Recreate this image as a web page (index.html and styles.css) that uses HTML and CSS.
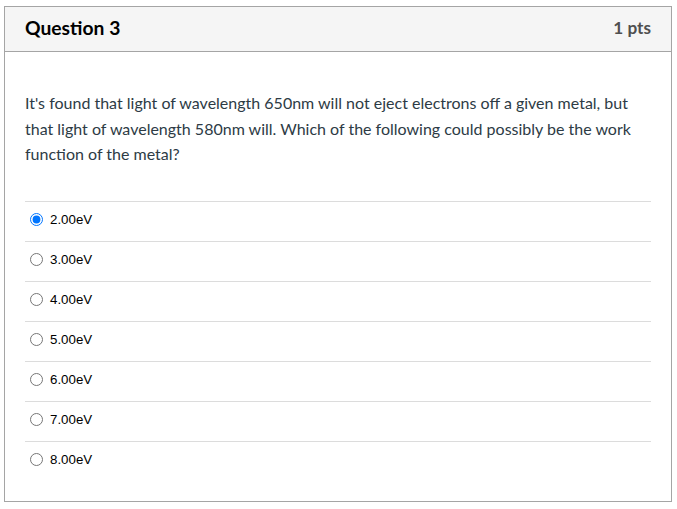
FILE: index.html
```html
<!DOCTYPE html>
<html>
<head>
<meta charset="utf-8">
<link rel="stylesheet" href="styles.css">
</head>
<body>
<div class="question">
  <div class="header">
    <h2 class="title">Question 3</h2>
    <span class="pts">1 pts</span>
  </div>
  <div class="content">
    <p class="text">It's found that light of wavelength 650nm will not eject electrons off a given metal, but that light of wavelength 580nm will. Which of the following could possibly be the work function of the metal?</p>
    <div class="answers">
      <label class="answer"><input type="radio" name="a" checked><span>2.00eV</span></label>
      <label class="answer"><input type="radio" name="a"><span>3.00eV</span></label>
      <label class="answer"><input type="radio" name="a"><span>4.00eV</span></label>
      <label class="answer"><input type="radio" name="a"><span>5.00eV</span></label>
      <label class="answer"><input type="radio" name="a"><span>6.00eV</span></label>
      <label class="answer"><input type="radio" name="a"><span>7.00eV</span></label>
      <label class="answer"><input type="radio" name="a"><span>8.00eV</span></label>
    </div>
  </div>
</div>
</body>
</html>
```
FILE: styles.css
```css
html, body { margin: 0; padding: 0; background: #fff; }
body { font-family: Lato, "Liberation Sans", sans-serif; color: #2d3b45; }
.question {
  margin: 6px 0 0 4px;
  width: 666px;
  border: 1px solid #a5a5a5;
  box-sizing: content-box;
}
.header {
  display: flex;
  justify-content: space-between;
  align-items: center;
  height: 45px;
  padding: 0 20px 3px 20px;
  box-sizing: border-box;
  background: #f5f5f5;
  border-bottom: 1px solid #a5a5a5;
}
.title {
  margin: 0;
  font-size: 19.3px;
  font-weight: 700;
  color: #000;
}
.pts {
  font-size: 17.2px;
  font-weight: 700;
  color: #4f4f4f;
}
.content {
  padding: 38px 20px 20px 20px;
}
.text {
  margin: 0 0 34px 0;
  font-size: 16px;
  line-height: 25.5px;
  color: #2d3b45;
}
.answers { display: flex; flex-direction: column; }
.answer {
  display: flex;
  align-items: center;
  height: 40px;
  border-top: 1px solid #dcdcdc;
  font-family: "Liberation Sans", Arial, sans-serif;
  font-size: 13.3px;
  color: #000;
  box-sizing: border-box;
  padding-bottom: 3px;
}
.answer input {
  margin: 0 7px 0 5px;
  width: 13px;
  height: 13px;
}
```
